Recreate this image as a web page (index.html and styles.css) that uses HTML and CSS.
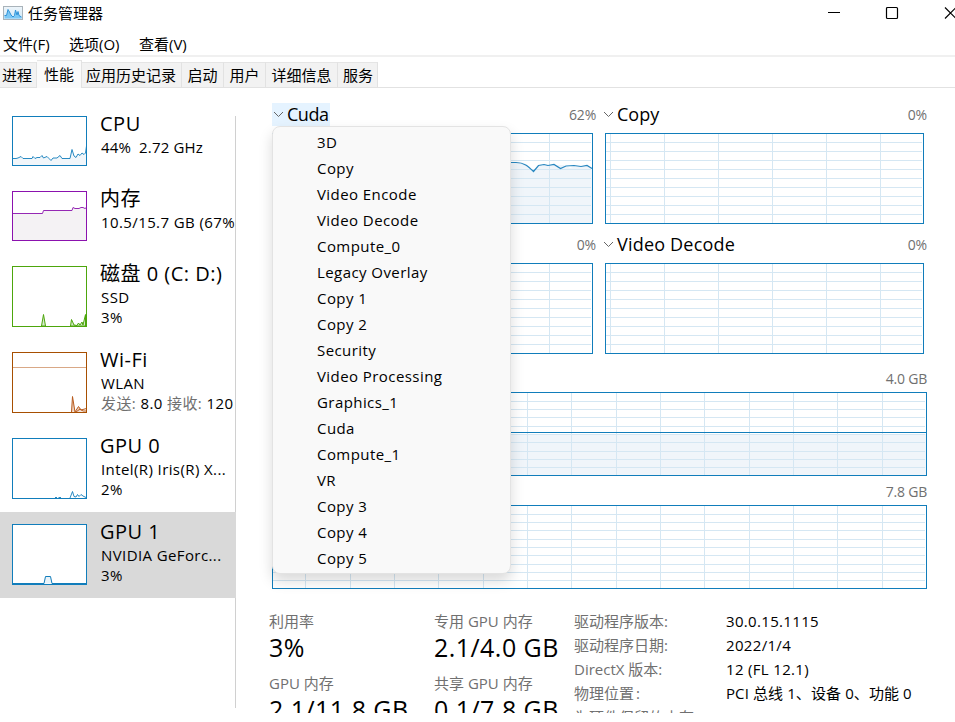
FILE: index.html
```html
<!DOCTYPE html>
<html lang="zh-CN">
<head>
<meta charset="utf-8">
<title>任务管理器</title>
<link rel="stylesheet" href="styles.css">
</head>
<body>
<div class="window">
  <header class="titlebar">
    <svg class="app-icon" width="20" height="14" viewBox="0 0 20 14">
      <defs><linearGradient id="ig" x1="0" y1="0" x2="0" y2="1"><stop offset="0" stop-color="#eef5fa"/><stop offset="1" stop-color="#cfe8f7"/></linearGradient></defs>
      <rect x=".5" y=".5" width="19" height="13" fill="url(#ig)" stroke="#a9b3ba"/>
      <path d="M1.500 12.500V9.500H3.500L5 3.500L6.500 6L8 9L10 11L11.500 9.500L12.500 4L14 9L15 5.500L16 9.500L18.500 11V12.500Z" fill="#7cc8f5"/>
      <path d="M1.500 9.500H3.500L5 3.500L6.500 6L8 9L10 11L11.500 9.500L12.500 4L14 9L15 5.500L16 9.500L18.500 11" fill="none" stroke="#2f93d8"/>
    </svg>
    <h1 class="app-title">任务管理器</h1>
    <svg class="controls" width="127" height="14" viewBox="0 0 127 14">
      <path d="M0 6.500H12" stroke="#000"/>
      <rect x="58.500" y="1.500" width="11" height="11" rx="1" fill="none" stroke="#000" stroke-width="1.200"/>
      <path d="M117 1.500L128 12.500M117 12.500L128 1.500" stroke="#000" stroke-width="1.200"/>
    </svg>
  </header>
  <nav class="menubar"><span class="m1">文件(F)</span><span class="m2">选项(O)</span><span>查看(V)</span></nav>
  <div class="tabs">
    <span class="tab t1">进程</span><span class="tab active">性能</span><span class="tab t3">应用历史记录</span><span class="tab t4">启动</span><span class="tab t5">用户</span><span class="tab t6">详细信息</span><span class="tab t7">服务</span>
  </div>
  <div class="content">
    <aside class="sidebar">
      <div class="item">
        <svg class="mini" width="75" height="50" viewBox="0 0 75 50"><path d="M.5 42.500H4L6 42L9 40.500L11 42.500H20L21 40.500L23 42.500L25 41.500H28L30 39.500L31.500 42L35 40.500L37 42.500L39 44.500L41 42H45L48 39.500L50 42.500H58L60 33.500L62 40L64 41.500L66 38L68 39.500L70 37L72 38.500L73.500 37L74.500 30V49.500H.5Z" fill="#f1f6fa" stroke="#117dbb" stroke-width=".9"/><rect class="frame" x=".5" y=".5" width="74" height="49" stroke="#117dbb"/></svg>
        <div class="info"><h2>CPU</h2><p class="cpu">44%&nbsp; 2.72 GHz</p></div>
      </div>
      <div class="item">
        <svg class="mini" width="75" height="50" viewBox="0 0 75 50"><path d="M.5 22.500H30.500L31.500 19.500H60L61 16.500L63 17.500H67L69 16.500H71L73 17.500L74.500 16.500V49.500H.5Z" fill="#f4f2f4" stroke="#9528b4"/><rect class="frame" x=".5" y=".5" width="74" height="49" stroke="#8b12ae"/></svg>
        <div class="info"><h2>内存</h2><p>10.5/15.7 GB (67%)</p></div>
      </div>
      <div class="item tall">
        <svg class="mini" width="75" height="61" viewBox="0 0 75 61"><path d="M29.500 60L31.500 48.500L33.500 60ZM58.500 60L59.500 53.500L62 59L65 59.500L66.500 57L68 59L70 56L71 59L73.500 48.500V60Z" fill="#d5eacb" stroke="#4da60c"/><rect class="frame" x=".5" y=".5" width="74" height="60" stroke="#4da60c"/></svg>
        <div class="info"><h2>磁盘 0 (C: D:)</h2><p>SSD</p><p>3%</p></div>
      </div>
      <div class="item tall">
        <svg class="mini" width="75" height="61" viewBox="0 0 75 61"><path d="M1 15.500H74" stroke="#d9a886"/><path d="M59.500 60L60.500 44.500L62.500 57L63 60L66.500 54.500L69 58L74.500 56.500M64 60L68 57L71 59H74" fill="#eed3c2" stroke="#b85a1c"/><rect class="frame" x=".5" y=".5" width="74" height="60" stroke="#a74f01"/></svg>
        <div class="info"><h2>Wi-Fi</h2><p>WLAN</p><p class="net"><i>发送:</i> 8.0 <i>接收:</i> 120</p></div>
      </div>
      <div class="item tall">
        <svg class="mini" width="75" height="61" viewBox="0 0 75 61"><path d="M43 59.500H45M46.500 59.500H49M58 60L60.500 53.500L62 58.500L64 59L65.500 56.500L67 58.500L69 56.500L71 58L74 59.500" fill="none" stroke="#117dbb" stroke-width=".9"/><rect class="frame" x=".5" y=".5" width="74" height="60" stroke="#117dbb"/></svg>
        <div class="info"><h2>GPU 0</h2><p>Intel(R) Iris(R) X...</p><p>2%</p></div>
      </div>
      <div class="item tall selected">
        <svg class="mini" width="75" height="61" viewBox="0 0 75 61"><rect x="0" y="0" width="75" height="61" fill="#fff"/><path d="M.5 59.500H32L33.500 52.500H38.500L40 59.500H74" fill="#eaf3f9" stroke="#117dbb"/><rect class="frame" x=".5" y=".5" width="74" height="60" stroke="#117dbb"/></svg>
        <div class="info"><h2>GPU 1</h2><p>NVIDIA GeForc...</p><p>3%</p></div>
      </div>
    </aside>
    <main class="main">
      <section class="engines">
        <div class="engine">
          <div class="ehead"><button class="picker open"><svg class="chev" width="11" height="7" viewBox="0 0 11 7"><path d="M1 1L5.500 5.500L10 1"/></svg>Cuda</button><span class="pct">62%</span></div>
          <svg class="plot" width="321" height="91" viewBox="0 0 321 91"><path class="fill" d="M1 29H246L252 30L257 33L261 38L266 32H292L298 35L304 33H315L320 35V90H1Z"/><path class="grid" d="M7.500 1V90M61.500 1V90M115.500 1V90M169.500 1V90M223.500 1V90M277.500 1V90M1 9.500H319M1 18.500H319M1 27.500H319M1 36.500H319M1 45.500H319M1 54.500H319M1 63.500H319M1 72.500H319M1 81.500H319"/><path class="line" d="M1 29.500H244C252 29.500 256 33 261.500 38.500L266.500 32.500L272 31.500L276 32.500L282 31.500L288.500 35.500L294 33L302 32.500L309 33.500L315 32.500L320 35.500"/><rect class="box" x=".5" y=".5" width="320" height="90"/></svg>
          <ul class="menu">
            <li>3D</li><li>Copy</li><li>Video Encode</li><li>Video Decode</li><li>Compute_0</li><li>Legacy Overlay</li><li>Copy 1</li><li>Copy 2</li><li>Security</li><li>Video Processing</li><li>Graphics_1</li><li>Cuda</li><li>Compute_1</li><li>VR</li><li>Copy 3</li><li>Copy 4</li><li>Copy 5</li>
          </ul>
        </div>
        <div class="engine right">
          <div class="ehead"><button class="picker"><svg class="chev" width="11" height="7" viewBox="0 0 11 7"><path d="M1 1L5.500 5.500L10 1"/></svg>Copy</button><span class="pct">0%</span></div>
          <svg class="plot" width="319" height="91" viewBox="0 0 319 91"><path class="grid" d="M5.500 1V90M59.500 1V90M113.500 1V90M167.500 1V90M221.500 1V90M275.500 1V90M1 9.500H317M1 18.500H317M1 27.500H317M1 36.500H317M1 45.500H317M1 54.500H317M1 63.500H317M1 72.500H317M1 81.500H317"/><rect class="box" x=".5" y=".5" width="318" height="90"/></svg>
        </div>
        <div class="engine">
          <div class="ehead"><span></span><span class="pct">0%</span></div>
          <svg class="plot" width="321" height="91" viewBox="0 0 321 91"><path class="grid" d="M7.500 1V90M61.500 1V90M115.500 1V90M169.500 1V90M223.500 1V90M277.500 1V90M1 9.500H319M1 18.500H319M1 27.500H319M1 36.500H319M1 45.500H319M1 54.500H319M1 63.500H319M1 72.500H319M1 81.500H319"/><rect class="box" x=".5" y=".5" width="320" height="90"/></svg>
        </div>
        <div class="engine right">
          <div class="ehead"><button class="picker wide"><svg class="chev" width="11" height="7" viewBox="0 0 11 7"><path d="M1 1L5.500 5.500L10 1"/></svg>Video Decode</button><span class="pct">0%</span></div>
          <svg class="plot" width="319" height="91" viewBox="0 0 319 91"><path class="grid" d="M5.500 1V90M59.500 1V90M113.500 1V90M167.500 1V90M221.500 1V90M275.500 1V90M1 9.500H317M1 18.500H317M1 27.500H317M1 36.500H317M1 45.500H317M1 54.500H317M1 63.500H317M1 72.500H317M1 81.500H317"/><rect class="box" x=".5" y=".5" width="318" height="90"/></svg>
        </div>
      </section>
      <section class="memory">
        <div class="mhead">4.0 GB</div>
        <svg class="plot" width="655" height="84" viewBox="0 0 655 84"><path class="fill" d="M1 42H654V83H1Z"/><path class="grid" d="M33.500 1V83M78.500 1V83M122.500 1V83M166.500 1V83M211.500 1V83M255.500 1V83M299.500 1V83M344.500 1V83M388.500 1V83M432.500 1V83M477.500 1V83M521.500 1V83M565.500 1V83M610.500 1V83M1 9.500H653M1 17.500H653M1 25.500H653M1 34.500H653M1 42.500H653M1 50.500H653M1 59.500H653M1 67.500H653M1 75.500H653"/><path class="level" d="M1 40.500H654"/><rect class="box" x=".5" y=".5" width="654" height="83"/></svg>
      </section>
      <section class="memory">
        <div class="mhead">7.8 GB</div>
        <svg class="plot" width="655" height="84" viewBox="0 0 655 84"><path class="grid" d="M33.500 1V83M78.500 1V83M122.500 1V83M166.500 1V83M211.500 1V83M255.500 1V83M299.500 1V83M344.500 1V83M388.500 1V83M432.500 1V83M477.500 1V83M521.500 1V83M565.500 1V83M610.500 1V83M1 9.500H653M1 17.500H653M1 25.500H653M1 34.500H653M1 42.500H653M1 50.500H653M1 59.500H653M1 67.500H653M1 75.500H653"/><rect class="box" x=".5" y=".5" width="654" height="83"/></svg>
      </section>
      <section class="stats">
        <div class="figures">
          <div><h3>利用率</h3><strong>3%</strong></div>
          <div><h3>专用 GPU 内存</h3><strong>2.1/4.0 GB</strong></div>
          <div><h3>GPU 内存</h3><strong>2.1/11.8 GB</strong></div>
          <div><h3>共享 GPU 内存</h3><strong>0.1/7.8 GB</strong></div>
        </div>
        <dl class="details">
          <dt>驱动程序版本:</dt><dd>30.0.15.1115</dd>
          <dt>驱动程序日期:</dt><dd>2022/1/4</dd>
          <dt>DirectX 版本:</dt><dd>12 (FL 12.1)</dd>
          <dt>物理位置<span class="colon">:</span></dt><dd class="loc">PCI 总线 1、设备 0、功能 0</dd>
          <dt>为硬件保留的内存:</dt><dd>108 MB</dd>
        </dl>
      </section>
    </main>
  </div>
</div>
</body>
</html>
```
FILE: styles.css
```css
* { box-sizing: border-box; margin: 0; padding: 0; }
body { background: #fff; }
.window { width: 955px; height: 722px; overflow: hidden; background: #fff; color: #000; font: 15px/20px "Open Sans", "Noto Sans CJK SC", sans-serif; display: flex; flex-direction: column; white-space: nowrap; }
svg { display: block; flex: none; }

.titlebar { height: 28px; display: flex; align-items: center; padding: 0 0 2px 3px; flex: none; }
.app-title { font-size: 15px; font-weight: 400; margin-left: 5px; flex: 1; }
.menubar { height: 29px; flex: none; padding: 6px 3px 0; display: flex; border-bottom: 2px solid #f0f0f0; }
.m1 { width: 66px; }
.m2 { width: 70px; }

.tabs { height: 31px; flex: none; display: flex; align-items: flex-end; border-bottom: 1px solid #e2e2e2; }
.tab { height: 25px; background: #f2f2f2; border-top: 1px solid #e5e5e5; border-right: 1px solid #e2e2e2; text-align: center; line-height: 25px; }
.t1 { width: 37px; padding-right: 2px; }
.active { width: 45px; height: 28px; margin-bottom: -1px; background: #fafafa; line-height: 26px; }
.t3 { width: 100px; padding-right: 1px; }
.t4 { width: 42px; }
.t5 { width: 42px; }
.t6 { width: 72px; }
.t7 { width: 40px; padding-left: 1px; }

.content { display: flex; height: 625px; overflow: hidden; flex: none; }
.sidebar { width: 236px; padding-top: 16px; flex: none; background: linear-gradient(#d0d0d0, #d0d0d0) 235px 28px / 1px 592px no-repeat; }
.item { width: 235px; height: 75px; padding: 12px 0 0 12px; display: flex; overflow: hidden; }
.tall { height: 86px; }
.selected { width: 236px; background: #d9d9d9; }
.frame { fill: none; shape-rendering: crispEdges; }
.info { margin: -6px 0 0 14px; letter-spacing: .4px; }
.info h2 { font-size: 20px; font-weight: 400; line-height: 28px; height: 27px; margin-left: -1px; letter-spacing: .5px; }
.info p { line-height: 20px; }
.cpu { letter-spacing: .15px; }
.net i { font-style: normal; color: #707070; }

.main { flex: 1; padding: 15px 28px 0 36px; }
.engines { display: grid; grid-template-columns: 333px 322px; grid-auto-rows: 130px; }
.engine { position: relative; }
.ehead { height: 30px; display: flex; justify-content: space-between; align-items: flex-start; }
.engine:not(.right) .ehead { width: 324px; }
.right .ehead { margin-left: -3px; }
.picker { height: 23px; border: 0; background: none; font: 18px/23px "Open Sans", "Noto Sans CJK SC", sans-serif; color: #000; display: flex; align-items: center; gap: 3px; padding: 0 2px 0 1px; }
.wide { letter-spacing: .2px; }
.open { background: #e5f3ff; letter-spacing: -.5px; }
.chev path { fill: none; stroke: #666; }
.pct, .mhead { font-size: 14px; color: #707070; line-height: 24px; letter-spacing: -.2px; }
.grid { fill: none; stroke: #d5e7f3; shape-rendering: crispEdges; }
.fill { fill: #f0f5fa; }
.line { fill: none; stroke: #2887c0; stroke-width: 1.200; }
.level { stroke: #117dbb; shape-rendering: crispEdges; }
.box { fill: none; stroke: #117dbb; shape-rendering: crispEdges; }
.menu { position: absolute; z-index: 2; left: 0; top: 23px; width: 239px; height: 448px; padding: 3px 0 0 44px; list-style: none; background: #f9f9f9; border: 1px solid #e3e3e3; border-radius: 8px; box-shadow: 0 7px 14px rgba(0,0,0,.15); letter-spacing: .43px; }
.menu li { height: 26px; line-height: 25px; }
.memory { height: 113px; }
.mhead { text-align: right; height: 25px; }
.engines + .memory { margin-top: 4px; }

.stats { display: flex; margin: 18px -28px 0 -3px; }
.figures { width: 305px; display: grid; grid-template-columns: 165px 140px; grid-auto-rows: 62px; flex: none; }
.figures h3 { font-size: 15px; font-weight: 400; line-height: 20px; color: #707070; }
.figures strong { display: block; font-size: 25px; font-weight: 400; line-height: 33px; letter-spacing: .45px; }
.details { display: grid; grid-template-columns: 152px 1fr; grid-auto-rows: 24px; line-height: 20px; }
.details dt { color: #707070; }
.details dd { letter-spacing: .33px; }
.details .loc { letter-spacing: .1px; }
.colon { margin-left: 2px; }
```
